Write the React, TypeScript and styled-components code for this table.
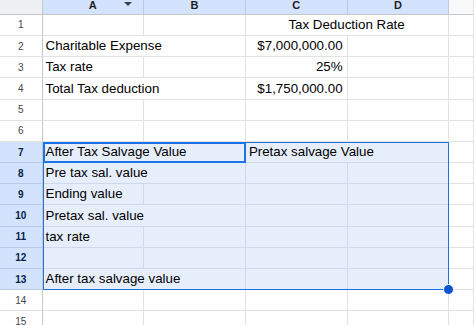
import React from "react";
import styled, { createGlobalStyle, css } from "styled-components";

const BLUE = "#1a73e8";
const GRID = "#e1e3e1";
const GRID_SEL = "#cfd9ea";
const SEL_FILL = "#e7eefb";
const HEAD_SEL = "#d3e3fd";

const Global = createGlobalStyle`
  html, body {
    margin: 0;
    padding: 0;
    background: #ffffff;
    overflow: hidden;
  }
  body {
    font-family: "Liberation Sans", Arial, sans-serif;
  }
`;

const Sheet = styled.div`
  display: grid;
  grid-template-columns: 42.5px repeat(4, 101.7px) 1fr;
  grid-template-rows: 14.8px repeat(15, 21.2px);
  width: 474px;
  height: 325px;
  overflow: hidden;
  position: relative;
  background: #ffffff;
`;

const Corner = styled.div`
  box-sizing: border-box;
  grid-row: 1;
  grid-column: 1;
  background: #eef0f1;
  border-right: 1px solid #c4c7c5;
  border-bottom: 1px solid #c4c7c5;
`;

const ColHeader = styled.div<{ $sel: boolean; $col: number }>`
  box-sizing: border-box;
  grid-row: 1;
  grid-column: ${(p) => p.$col};
  position: relative;
  display: flex;
  justify-content: center;
  align-items: flex-start;
  overflow: hidden;
  font-size: 11px;
  line-height: 10px;
  font-weight: ${(p) => (p.$sel ? 700 : 400)};
  color: ${(p) => (p.$sel ? "#1f1f1f" : "#444746")};
  background: ${(p) => (p.$sel ? HEAD_SEL : "#f8f9fa")};
  border-right: 1px solid ${(p) => (p.$sel ? "#bccbe4" : "#e1e3e1")};
  border-bottom: 1px solid #c4c7c5;
`;

const Caret = styled.span`
  position: absolute;
  right: 11px;
  top: 2px;
  width: 0;
  height: 0;
  border-left: 4px solid transparent;
  border-right: 4px solid transparent;
  border-top: 4px solid #3c4043;
`;

const RowHeader = styled.div<{ $sel: boolean; $row: number }>`
  box-sizing: border-box;
  grid-row: ${(p) => p.$row};
  grid-column: 1;
  display: flex;
  align-items: center;
  justify-content: center;
  font-size: 10px;
  font-weight: ${(p) => (p.$sel ? 700 : 400)};
  color: ${(p) => (p.$sel ? "#041e49" : "#444746")};
  background: ${(p) => (p.$sel ? HEAD_SEL : "#ffffff")};
  border-right: 1px solid #c4c7c5;
  border-bottom: 1px solid ${(p) => (p.$sel ? "#bccbe4" : GRID)};
`;

type Align = "left" | "right" | "center";

const CellBox = styled.div<{
  $row: number;
  $col: number;
  $span: number;
  $align: Align;
  $sel: boolean;
}>`
  box-sizing: border-box;
  grid-row: ${(p) => p.$row};
  grid-column: ${(p) => p.$col} / span ${(p) => p.$span};
  display: flex;
  align-items: flex-end;
  justify-content: ${(p) =>
    p.$align === "right" ? "flex-end" : p.$align === "center" ? "center" : "flex-start"};
  padding: 0 4px 2px 3px;
  white-space: nowrap;
  overflow: hidden;
  font-size: 13.33px;
  line-height: 16px;
  color: #000000;
  ${(p) =>
    p.$sel
      ? css`
          background: ${SEL_FILL};
          border-right: 1px solid ${GRID_SEL};
          border-bottom: 1px solid ${GRID_SEL};
        `
      : css`
          background: #ffffff;
          border-right: 1px solid ${GRID};
          border-bottom: 1px solid ${GRID};
        `}
`;

const Selection = styled.div`
  box-sizing: border-box;
  grid-column: 2 / 6;
  grid-row: 8 / 15;
  position: relative;
  border: 1px solid ${BLUE};
  pointer-events: none;
  z-index: 2;
`;

const ActiveCell = styled.div`
  box-sizing: border-box;
  grid-column: 2 / 4;
  grid-row: 8 / 9;
  border: 2px solid ${BLUE};
  pointer-events: none;
  z-index: 3;
`;

const FillHandle = styled.span`
  position: absolute;
  right: -6px;
  bottom: -6px;
  width: 9px;
  height: 9px;
  border-radius: 50%;
  background: #0b57d0;
  border: 1px solid #ffffff;
`;

type Cell = { text?: string; span?: number; align?: Align };

const columns = ["A", "B", "C", "D", ""];

const rows: Cell[][] = [
  [{}, {}, { text: "Tax Deduction Rate", span: 2, align: "center" }, {}],
  [{ text: "Charitable Expense", span: 2 }, { text: "$7,000,000.00", align: "right" }, {}, {}],
  [{ text: "Tax rate" }, {}, { text: "25%", align: "right" }, {}, {}],
  [{ text: "Total Tax deduction", span: 2 }, { text: "$1,750,000.00", align: "right" }, {}, {}],
  [{}, {}, {}, {}, {}],
  [{}, {}, {}, {}, {}],
  [{ text: "After Tax Salvage Value", span: 2 }, { text: "Pretax salvage Value", span: 2 }, {}],
  [{ text: "Pre tax sal. value", span: 2 }, {}, {}, {}],
  [{ text: "Ending value" }, {}, {}, {}, {}],
  [{ text: "Pretax sal. value", span: 2 }, {}, {}, {}],
  [{ text: "tax rate" }, {}, {}, {}, {}],
  [{}, {}, {}, {}, {}],
  [{ text: "After tax salvage value", span: 2 }, {}, {}, {}],
  [{}, {}, {}, {}, {}],
  [{}, {}, {}, {}, {}],
];

const isSelRow = (r: number) => r >= 7 && r <= 13;

export default function App() {
  return (
    <>
      <Global />
      <Sheet>
        <Corner />
        {columns.map((c, i) => (
          <ColHeader key={"h" + i} $col={i + 2} $sel={i < 4}>
            {c}
            {i === 0 && <Caret />}
          </ColHeader>
        ))}
        {rows.map((cells, ri) => {
          const rowNo = ri + 1;
          const gridRow = rowNo + 1;
          let col = 0;
          return (
            <React.Fragment key={"r" + rowNo}>
              <RowHeader $row={gridRow} $sel={isSelRow(rowNo)}>
                {rowNo}
              </RowHeader>
              {cells.map((cell, ci) => {
                const span = cell.span ?? 1;
                const start = col;
                col += span;
                return (
                  <CellBox
                    key={ci}
                    $row={gridRow}
                    $col={start + 2}
                    $span={span}
                    $align={cell.align ?? "left"}
                    $sel={isSelRow(rowNo) && start < 4}
                  >
                    {cell.text}
                  </CellBox>
                );
              })}
            </React.Fragment>
          );
        })}
        <Selection>
          <FillHandle />
        </Selection>
        <ActiveCell />
      </Sheet>
    </>
  );
}
